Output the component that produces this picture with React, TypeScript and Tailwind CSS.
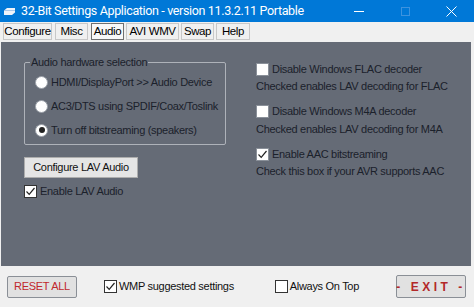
import React from "react";

const Radio = ({ checked }: { checked?: boolean }) => (
  <span className="w-[13px] h-[13px] rounded-full bg-white border border-[#9aa0a8] flex items-center justify-center shrink-0">
    {checked && <span className="w-[6px] h-[6px] rounded-full bg-[#222]" />}
  </span>
);

const Check = ({ checked, dark }: { checked?: boolean; dark?: boolean }) => (
  <span
    className={`w-[13px] h-[13px] bg-white border flex items-center justify-center shrink-0 ${
      dark ? "border-[#333]" : "border-[#8a9099]"
    }`}
  >
    {checked && (
      <svg width="11" height="11" viewBox="0 0 11 11">
        <path d="M1.5 5.5 L4.2 8.3 L9.5 2" fill="none" stroke="#222" strokeWidth="1.2" />
      </svg>
    )}
  </span>
);

const tabs: { t: string; w: number; ml: number }[] = [
  { t: "Configure", w: 49, ml: 3 },
  { t: "Misc", w: 33, ml: 3 },
  { t: "Audio", w: 33, ml: 3 },
  { t: "AVI WMV", w: 53, ml: 2 },
  { t: "Swap", w: 33, ml: 2 },
  { t: "Help", w: 34, ml: 2 },
];

export default function App() {
  return (
    <div
      className="w-[474px] h-[307px] bg-[#f0f0f0] flex flex-col overflow-hidden whitespace-nowrap"
      style={{ fontFamily: "'Liberation Sans', Arial, sans-serif" }}
    >
      {/* Title bar */}
      <div className="h-[22px] bg-[#0078d7] flex items-center text-white shrink-0">
        <svg width="11" height="7" viewBox="0 0 11 7" className="ml-[4px] mr-[6px]">
          <path d="M0 2.5 L3 0 L11 0 L11 4.5 L8 7 L0 7 Z" fill="#eef3f9" />
          <path d="M0 2.5 L11 2.5" stroke="#9bbde3" strokeWidth="0.8" />
        </svg>
        <span
          className="text-[12.5px] tracking-[-0.35px] leading-none"
          style={{ fontFamily: "Roboto, 'Liberation Sans', sans-serif" }}
        >
          32-Bit Settings Application - version 11.3.2.11 Portable
        </span>
        <div className="flex-1" />
        <div className="w-[46px] flex justify-center">
          <span className="w-[10px] h-px bg-white" />
        </div>
        <div className="w-[46px] flex justify-center">
          <span className="w-[9px] h-[9px] border border-[#3d93df]" />
        </div>
        <div className="w-[46px] flex justify-center">
          <svg width="11" height="11" viewBox="0 0 11 11">
            <path d="M0.5 0.5 L10.5 10.5 M10.5 0.5 L0.5 10.5" stroke="white" strokeWidth="1" />
          </svg>
        </div>
      </div>

      {/* Tabs */}
      <div className="h-[20px] flex items-start pt-[1px] shrink-0">
        {tabs.map((x) => (
          <div
            key={x.t}
            style={{ width: x.w, marginLeft: x.ml }}
            className={`h-[17px] flex items-center justify-center text-[11.5px] tracking-[-0.4px] text-black border ${
              x.t === "Audio" ? "border-[#707070] bg-[#f8f8f8]" : "border-[#c8c8c8] bg-[#f0f0f0]"
            }`}
          >
            {x.t}
          </div>
        ))}
      </div>

      {/* Main panel */}
      <div className="ml-[1px] w-[470px] h-[224px] bg-[#656b76] text-[#1b212b] text-[11px] tracking-[-0.3px] flex shrink-0">
        {/* Left column */}
        <div className="w-[232px] pl-[23px] flex flex-col">
          <div className="relative border border-[#aeb2b9] rounded-[2px] w-[202px] h-[83px] mt-[20px]">
            <span className="absolute left-[5px] -top-[8px] bg-[#656b76] px-[1px] leading-[14px]">
              Audio hardware selection
            </span>
            <div className="flex flex-col gap-[10px] pl-[10px] pt-[12px]">
              <div className="flex items-center gap-[3px] h-[14px]">
                <Radio /> <span>HDMI/DisplayPort &gt;&gt; Audio Device</span>
              </div>
              <div className="flex items-center gap-[3px] h-[14px]">
                <Radio /> <span>AC3/DTS using SPDIF/Coax/Toslink</span>
              </div>
              <div className="flex items-center gap-[3px] h-[14px]">
                <Radio checked /> <span>Turn off bitstreaming (speakers)</span>
              </div>
            </div>
          </div>
          <div className="mt-[12px] w-[114px] h-[21px] bg-[#e5e5e5] border border-[#adadad] flex items-center justify-center text-[#111]">
            Configure LAV Audio
          </div>
          <div className="mt-[6px] flex items-center gap-[3px] h-[14px]">
            <Check checked dark /> <span>Enable LAV Audio</span>
          </div>
        </div>

        {/* Right column */}
        <div className="flex flex-col pl-[23px]">
          <div className="flex items-center gap-[3px] h-[14px] mt-[20px]">
            <Check /> <span>Disable Windows FLAC decoder</span>
          </div>
          <div className="mt-[3px] h-[14px] leading-[14px]">Checked enables LAV decoding for FLAC</div>
          <div className="flex items-center gap-[3px] h-[14px] mt-[11px]">
            <Check /> <span>Disable Windows M4A decoder</span>
          </div>
          <div className="mt-[4px] h-[14px] leading-[14px]">Checked enables LAV decoding for M4A</div>
          <div className="flex items-center gap-[3px] h-[14px] mt-[11px]">
            <Check checked /> <span>Enable AAC bitstreaming</span>
          </div>
          <div className="mt-[3px] h-[14px] leading-[14px]">Check this box if your AVR supports AAC</div>
        </div>
      </div>

      {/* Bottom bar */}
      <div className="flex items-center h-[41px] text-[11px] tracking-[-0.3px] text-[#111]">
        <div className="ml-[7px] w-[70px] h-[22px] bg-[#e1e1e1] border border-[#8a8f96] rounded-[2px] flex items-center justify-center text-[#c0282c]">
          RESET ALL
        </div>
        <div className="ml-[27px] flex items-center gap-[2px]">
          <Check checked dark /> <span>WMP suggested settings</span>
        </div>
        <div className="ml-[auto] flex items-center gap-[2px]">
          <Check dark /> <span>Always On Top</span>
        </div>
        <div className="ml-[37px] mr-[8px] w-[70px] h-[23px] bg-[#e1e1e1] border border-[#8a8f96] rounded-[2px] flex items-center justify-center text-[#b3282a] font-bold tracking-[3.5px] text-[12px]">
          - EXIT -
        </div>
      </div>
    </div>
  );
}
